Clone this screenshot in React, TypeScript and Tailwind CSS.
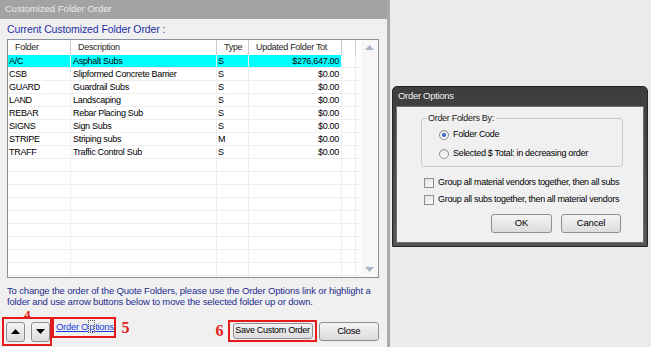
import React from 'react';

type Row = { code: string; desc: string; type: string; total: string };

const rows: Row[] = [
  { code: 'A/C', desc: 'Asphalt Subs', type: 'S', total: '$276,647.00' },
  { code: 'CSB', desc: 'Slipformed Concrete Barrier', type: 'S', total: '$0.00' },
  { code: 'GUARD', desc: 'Guardrail Subs', type: 'S', total: '$0.00' },
  { code: 'LAND', desc: 'Landscaping', type: 'S', total: '$0.00' },
  { code: 'REBAR', desc: 'Rebar Placing Sub', type: 'S', total: '$0.00' },
  { code: 'SIGNS', desc: 'Sign Subs', type: 'S', total: '$0.00' },
  { code: 'STRIPE', desc: 'Striping subs', type: 'M', total: '$0.00' },
  { code: 'TRAFF', desc: 'Traffic Control Sub', type: 'S', total: '$0.00' },
];

// empty rows fill the rest of the list
const filler: Row[] = Array.from({ length: 10 }, () => ({ code: '', desc: '', type: '', total: '' }));

const cols = 'grid grid-cols-[63px_146px_32px_93px_14px_1fr]';
const btn =
  'border border-[#8e8e8e] rounded-[3px] bg-linear-to-b from-[#f4f4f4] to-[#dcdcdc] flex items-center justify-center whitespace-nowrap text-[9.5px] tracking-[-0.2px] text-black';

function FolderList() {
  return (
    <div className="h-[239px] mt-[3px] border border-[#8a8f99] bg-white flex overflow-hidden">
      <div className="flex-1 flex flex-col">
        <div className={`${cols} h-[20px] items-center text-[9px] tracking-[-0.3px] text-[#1e1e1e]`}>
          <div className="pl-[7px] border-r border-[#c9ccd6] h-[15px] flex items-center">Folder</div>
          <div className="pl-[7px] border-r border-[#c9ccd6] h-[15px] flex items-center">Description</div>
          <div className="pl-[7px] border-r border-[#c9ccd6] h-[15px] flex items-center">Type</div>
          <div className="pl-[7px] border-r border-[#c9ccd6] h-[15px] flex items-center">Updated Folder Tot</div>
          <div className="border-r border-[#c9ccd6] h-[15px]" />
          <div />
        </div>
        {[...rows, ...filler].map((r, i) => (
          <div key={i} className={`${cols} h-[13px] shrink-0 text-[9px] tracking-[-0.3px] text-black leading-[12px]`}>
            <div className={`pl-[1px] border-r border-b border-[#eeeeee] ${i === 0 ? 'bg-[#00ffff]' : ''}`}>{r.code}</div>
            <div className={`pl-[2px] border-r border-b border-[#eeeeee] ${i === 0 ? 'bg-[#00ffff]' : ''}`}>{r.desc}</div>
            <div className={`pl-[1px] border-r border-b border-[#eeeeee] ${i === 0 ? 'bg-[#00ffff]' : ''}`}>{r.type}</div>
            <div className={`pr-[2px] text-right border-r border-b border-[#eeeeee] ${i === 0 ? 'bg-[#00ffff]' : ''}`}>{r.total}</div>
            <div className="border-r border-b border-[#eeeeee]" />
            <div className="border-b border-[#eeeeee]" />
          </div>
        ))}
      </div>
      <div className="w-[17px] bg-[#f7f7f7] flex flex-col items-center justify-between py-[5px]">
        <svg width="9" height="5" viewBox="0 0 9 5">
          <polygon points="0,5 4.5,0 9,5" fill="#a8b4c8" />
        </svg>
        <svg width="9" height="5" viewBox="0 0 9 5">
          <polygon points="0,0 4.5,5 9,0" fill="#a8b4c8" />
        </svg>
      </div>
    </div>
  );
}

function Radio({ checked, label }: { checked?: boolean; label: string }) {
  return (
    <div className="flex items-center h-[14px] pl-[17px]">
      <div className="w-[10px] h-[10px] rounded-full border border-[#8c8c8c] bg-linear-to-b from-[#e6e6e6] to-[#fbfbfb] flex items-center justify-center">
        {checked && <div className="w-[4px] h-[4px] rounded-full bg-[#3566cc]" />}
      </div>
      <span className="ml-[4px]">{label}</span>
    </div>
  );
}

function Check({ label }: { label: string }) {
  return (
    <div className="flex items-center h-[14px]">
      <div className="w-[10px] h-[10px] border border-[#8f8f8f] bg-linear-to-br from-[#e2e2e2] to-[#fafafa]" />
      <span className="ml-[4px]">{label}</span>
    </div>
  );
}

function OrderOptions() {
  return (
    <div className="w-[256px] h-[161px] rounded-t-[5px] bg-linear-to-b from-[#3d3d3d] to-[#555555] border border-[#262626] flex flex-col px-[3px] pb-[3px]">
      <div className="h-[19px] shrink-0 flex items-center pl-[2px] text-[9.5px] tracking-[-0.3px] text-[#f2f2f2]">
        Order Options
      </div>
      <div className="flex-1 bg-[#f0f0f0] border border-[#707070] flex flex-col text-[9px] tracking-[-0.3px] text-black">
        <fieldset className="ml-[24px] w-[202px] mt-[5px] border border-[#c3cbd3] rounded-[3px] pb-[5px]">
          <legend className="ml-[4px] px-[2px] leading-[12px] text-[#1a1a1a]">Order Folders By:</legend>
          <div className="mt-[4px]">
            <Radio checked label="Folder Code" />
          </div>
          <div className="mt-[5px]">
            <Radio label="Selected $ Total: in decreasing order" />
          </div>
        </fieldset>
        <div className="ml-[27px] mt-[9px] flex flex-col gap-[3px]">
          <Check label="Group all material vendors together, then all subs" />
          <Check label="Group all subs together, then all material vendors" />
        </div>
        <div className="flex justify-end gap-[9px] mr-[22px] mt-[7px]">
          <div className={`${btn} w-[61px] h-[19px]`}>OK</div>
          <div className={`${btn} w-[60px] h-[19px]`}>Cancel</div>
        </div>
      </div>
    </div>
  );
}

export default function App() {
  return (
    <div className="w-[651px] h-[347px] flex bg-[#ebebeb] overflow-hidden font-['Liberation_Sans',Arial,sans-serif]">
      {/* main dialog */}
      <div className="w-[390px] h-full shrink-0 flex flex-col bg-[#f0f0f0] border-r-[3px] border-[#aaaaaa] relative">
        <div className="h-[19px] shrink-0 bg-[#a3a3a3] text-[#ececec] text-[9.5px] pl-[5px] flex items-center">
          Customized Folder Order
        </div>
        <div className="flex-1 flex flex-col pl-[7px] pr-[8px]">
          <div className="mt-[3px] h-[14px] leading-[14px] text-[10.5px] tracking-[-0.1px] text-[#2330a6]">
            Current Customized Folder Order :
          </div>
          <FolderList />
          <div className="mt-[7px] text-[9.5px] leading-[11px] tracking-[-0.15px] text-[#1f2c8f] whitespace-nowrap">
            To change the order of the Quote Folders, please use the Order Options link or highlight a
            <br />
            folder and use arrow buttons below to move the selected folder up or down.
          </div>
          <div className="mt-[10px] flex items-start">
            <div className="-ml-[5px] w-[50px] h-[29px] border-2 border-[#e31b1b] flex items-center pl-[2px] gap-[6px]">
              <div className={`${btn} w-[19px] h-[20px]`}>
                <svg width="9" height="5" viewBox="0 0 9 5">
                  <polygon points="0,5 4.5,0 9,5" fill="#000" />
                </svg>
              </div>
              <div className={`${btn} w-[19px] h-[20px]`}>
                <svg width="9" height="5" viewBox="0 0 9 5">
                  <polygon points="0,0 4.5,5 9,0" fill="#000" />
                </svg>
              </div>
            </div>
            <div className="w-[65px] h-[21px] border-2 border-[#e31b1b] flex items-center pl-[2px]">
              <span className="text-[9.5px] tracking-[-0.3px] text-[#1b3fd6] underline whitespace-nowrap">
                Order O<span className="border border-dotted border-[#555555]">p</span>tions
              </span>
            </div>
            <div className="ml-[5px] mt-[3px] text-[16px] leading-[16px] font-bold text-[#e31b1b] font-['Liberation_Serif',serif]">
              5
            </div>
            <div className="ml-[86px] mt-[6px] text-[16px] leading-[16px] font-bold text-[#e31b1b] font-['Liberation_Serif',serif]">
              6
            </div>
            <div className="ml-[5px] mt-[3px] w-[89px] h-[22px] border-2 border-[#e31b1b] flex items-center justify-center">
              <div className={`${btn} w-[80px] h-[16px] text-[9px] tracking-[-0.3px]`}>Save Custom Order</div>
            </div>
            <div className={`${btn} ml-[2px] mt-[5px] w-[61px] h-[19px]`}>Close</div>
          </div>
        </div>
        {/* annotation */}
        <div className="absolute left-[24px] top-[307px] text-[13px] leading-[15px] font-bold text-[#e31b1b] font-['Liberation_Serif',serif]">
          4
        </div>
      </div>
      <div className="flex-1 pl-[2px] pt-[86px]">
        <OrderOptions />
      </div>
    </div>
  );
}
